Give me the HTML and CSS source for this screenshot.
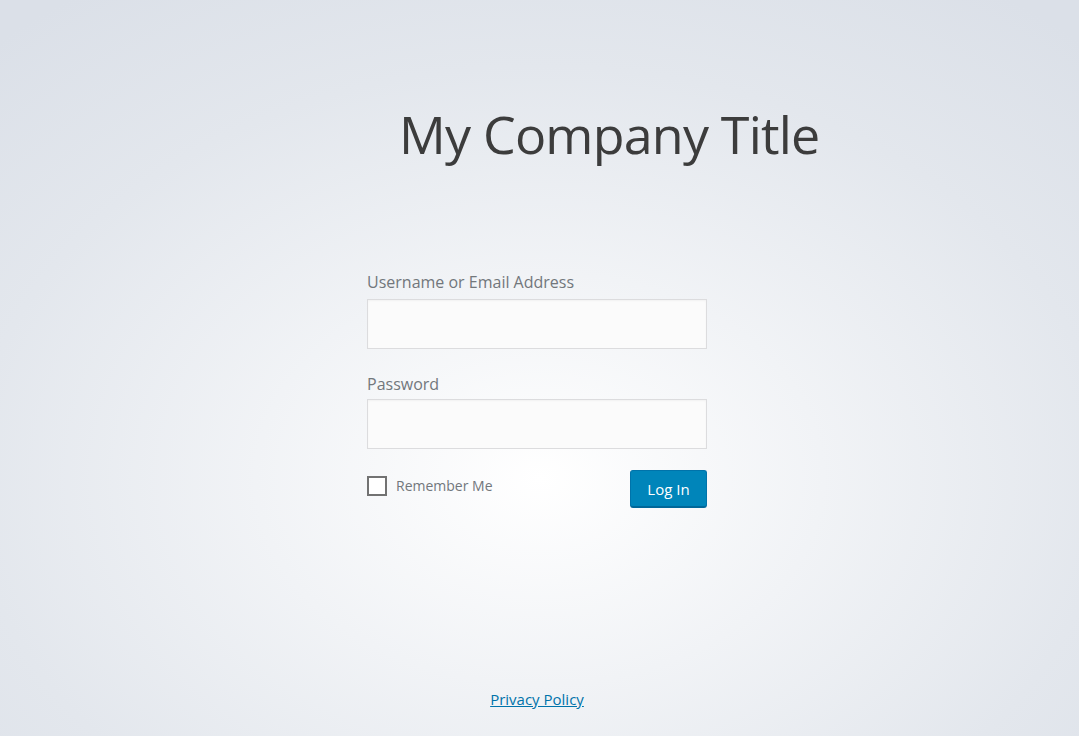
FILE: index.html
```html
<!DOCTYPE html>
<html>
<head>
<meta charset="utf-8">
<link rel="stylesheet" href="styles.css">
</head>
<body>
<div class="page">
  <h1 class="title">My Company Title</h1>
  <form class="login">
    <label class="field-label" for="user">Username or Email Address</label>
    <input class="field" id="user" type="text">
    <label class="field-label" for="pass">Password</label>
    <input class="field" id="pass" type="password">
    <div class="actions">
      <label class="remember"><span class="box"></span>Remember Me</label>
      <button class="btn" type="button">Log In</button>
    </div>
  </form>
  <div class="footer"><a class="privacy" href="#">Privacy Policy</a></div>
</div>
</body>
</html>
```

FILE: styles.css
```css
html, body {
  margin: 0;
  height: 100%;
}
body {
  background: radial-gradient(ellipse 75% 80% at 50% 65%, #ffffff 0%, #f1f3f6 35%, #e3e7ed 70%, #dbe0e8 100%);
  font-family: "Open Sans", "Noto Sans", sans-serif;
  overflow: hidden;
}
.page {
  width: 1074px;
  height: 736px;
  display: flex;
  flex-direction: column;
}
.title {
  margin: 97px 0 0 399px;
  font-weight: 400;
  font-size: 52px;
  line-height: 74px;
  color: #3c3c3c;
  letter-spacing: -0.8px;
}
.login {
  width: 340px;
  margin: 100px auto 0;
  display: flex;
  flex-direction: column;
}
.field-label {
  font-size: 16px;
  line-height: 22px;
  color: #72777c;
  margin-bottom: 6px;
}
.field {
  box-sizing: border-box;
  height: 50px;
  border: 1px solid #dcdcde;
  background: #fbfbfb;
  margin: 0 0 24px;
  box-shadow: inset 0 1px 2px rgba(0,0,0,0.04);
}
#user + .field-label { margin-bottom: 4px; }
#pass { margin-bottom: 21px; }
.actions {
  display: flex;
  justify-content: space-between;
  align-items: center;
}
.remember {
  display: flex;
  align-items: center;
  font-size: 14px;
  color: #72777c;
  margin-top: -7px;
}
.box {
  box-sizing: border-box;
  width: 20px;
  height: 20px;
  border: 2px solid #727272;
  background: #fff;
  margin-right: 9px;
}
.btn {
  width: 77px;
  height: 38px;
  border: 1px solid #0073aa;
  border-bottom: 2px solid #006799;
  border-radius: 3px;
  background: #0085ba;
  color: #fff;
  font-family: inherit;
  font-size: 15px;
  padding: 0;
}
.footer {
  margin-top: auto;
  margin-bottom: 26px;
  text-align: center;
}
.privacy {
  color: #0073aa;
  font-size: 15px;
}
```
